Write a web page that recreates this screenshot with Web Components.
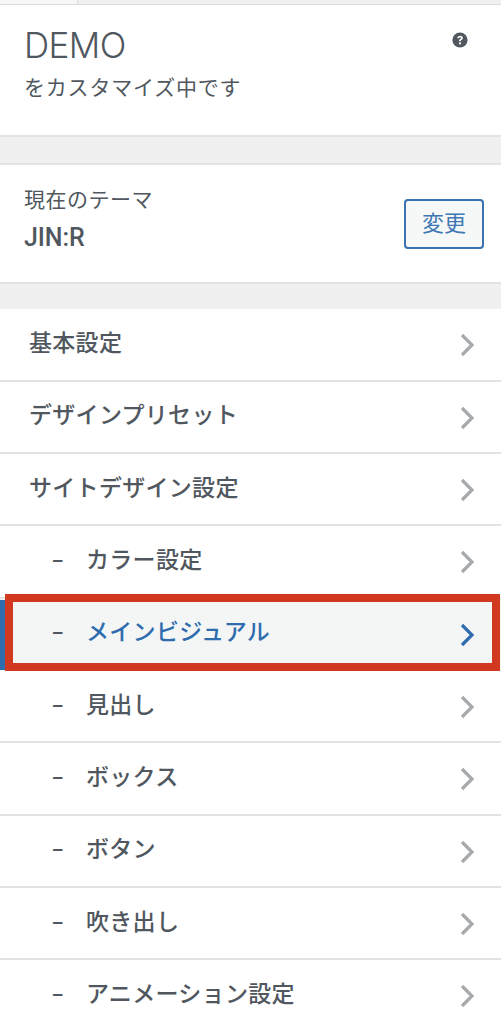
<!DOCTYPE html>
<html lang="ja">
<head>
<meta charset="utf-8">
<title>DEMO</title>
<style>
  html, body { margin: 0; padding: 0; background: #fff; }
  body { width: 501px; height: 1024px; overflow: hidden; font-family: "Liberation Sans", "Noto Sans CJK JP", sans-serif; color: #50575e; }
</style>
</head>
<body>
<top-strip></top-strip>
<customize-info name="DEMO" note="をカスタマイズ中です"></customize-info>
<gray-gap h="26"></gray-gap>
<theme-info label="現在のテーマ" theme="JIN:R" action="変更"></theme-info>
<gray-gap h="25.3"></gray-gap>
<menu-list>
  <menu-row>基本設定</menu-row>
  <menu-row>デザインプリセット</menu-row>
  <menu-row>サイトデザイン設定</menu-row>
  <menu-row sub>カラー設定</menu-row>
  <menu-row sub active>メインビジュアル</menu-row>
  <menu-row sub>見出し</menu-row>
  <menu-row sub>ボックス</menu-row>
  <menu-row sub>ボタン</menu-row>
  <menu-row sub>吹き出し</menu-row>
  <menu-row sub>アニメーション設定</menu-row>
</menu-list>

<script>
class TopStrip extends HTMLElement{
  constructor(){
    super()
    this.attachShadow({mode:'open'})
    this.shadowRoot.innerHTML = `
    <style>
      :host{ display:flex; height:5px; box-sizing:border-box; background:#f0f0f1; border-bottom:1px solid #dcdcde; }
      .tab{ width:77px; background:#f6f7f7; border-right:1px solid #dcdcde; }
    </style>
    <div class="tab"></div>`
  }
}
customElements.define('top-strip', TopStrip)

class GrayGap extends HTMLElement{
  constructor(){
    super()
    this.attachShadow({mode:'open'})
  }
  connectedCallback(){
    this.shadowRoot.innerHTML = `
    <style>
      :host{ display:block; box-sizing:border-box; background:#f0f0f1; height:${this.getAttribute('h')}px; }
    </style>`
  }
}
customElements.define('gray-gap', GrayGap)

class CustomizeInfo extends HTMLElement{
  constructor(){
    super()
    this.attachShadow({mode:'open'})
  }
  connectedCallback(){
    this.shadowRoot.innerHTML = `
    <style>
      :host{ display:block; position:relative; box-sizing:border-box; height:132px; background:#fff;
        border-bottom:2px solid #e2e3e4; padding:24px 24px 0; color:#50575e; }
      .name{ font-size:35px; line-height:36px; font-weight:300; font-family:"Inter","Liberation Sans",sans-serif; letter-spacing:-.6px; height:36px; margin-top:-2px; }
      .note{ font-size:21px; line-height:28px; margin-top:9px; font-family:"Noto Sans CJK JP",sans-serif; letter-spacing:.8px; }
      svg{ position:absolute; top:27px; right:33px; width:16px; height:16px; }
    </style>
    <div class="name">${this.getAttribute('name')}</div>
    <div class="note">${this.getAttribute('note')}</div>
    <svg viewBox="0 0 16 16" aria-hidden="true">
      <circle cx="8" cy="8" r="7.6" fill="#50575e"/>
      <path d="M5.3 6.2c0-1.6 1.2-2.5 2.8-2.5 1.6 0 2.7.9 2.7 2.2 0 1-.5 1.5-1.3 2-.6.4-.8.6-.8 1.3H7c0-1.2.3-1.7 1.1-2.2.6-.4.9-.6.9-1 0-.4-.4-.7-.9-.7-.6 0-1 .3-1 .9z" fill="#fff"/>
      <rect x="7" y="10.4" width="1.9" height="1.9" fill="#fff"/>
    </svg>`
  }
}
customElements.define('customize-info', CustomizeInfo)

class ThemeInfo extends HTMLElement{
  constructor(){
    super()
    this.attachShadow({mode:'open'})
  }
  connectedCallback(){
    this.shadowRoot.innerHTML = `
    <style>
      :host{ display:flex; align-items:center; justify-content:space-between; box-sizing:border-box; height:121px;
        background:#fff; border-top:2px solid #e2e3e4; border-bottom:2px solid #e2e3e4; padding:0 17px 0 24px; color:#50575e; }
      .label{ font-size:21px; line-height:28px; font-family:"Noto Sans CJK JP",sans-serif; letter-spacing:.5px; margin-top:-11px; }
      .theme{ font-family:Roboto,"Liberation Sans",sans-serif; font-size:25px; line-height:28px; font-weight:500; margin-top:12px; letter-spacing:-.1px; }
      button{ width:80px; height:50px; box-sizing:border-box; background:#f6f7f7; color:#3f78b5; border:2px solid #3a74b0; border-radius:4px;
        font:400 22px "Noto Sans CJK JP",sans-serif; padding:0 0 5px; }
    </style>
    <div>
      <div class="label">${this.getAttribute('label')}</div>
      <div class="theme">${this.getAttribute('theme')}</div>
    </div>
    <button type="button">${this.getAttribute('action')}</button>`
  }
}
customElements.define('theme-info', ThemeInfo)

class MenuList extends HTMLElement{
  constructor(){
    super()
    this.attachShadow({mode:'open'})
    this.shadowRoot.innerHTML = `
    <style>
      :host{ display:block; background:#fff; }
    </style>
    <slot></slot>`
  }
}
customElements.define('menu-list', MenuList)

class MenuRow extends HTMLElement{
  constructor(){
    super()
    this.attachShadow({mode:'open'})
    this.shadowRoot.innerHTML = `
    <style>
      :host{ display:flex; align-items:center; position:relative; box-sizing:border-box; height:72.35px; padding-left:29px; padding-bottom:7px;
        border-bottom:2px solid #e2e3e4; color:#50575e; background:#fff;
        font:500 23px "Noto Sans CJK JP",sans-serif; letter-spacing:.3px; }
      :host([sub]){ padding-left:52px; }
      .dash{ display:none; width:34px; flex:none; font-size:21px; font-weight:700; }
      :host([sub]) .dash{ display:block; }
      svg{ position:absolute; right:26px; top:24px; width:15px; height:24px; }
      svg path{ fill:none; stroke:#a7aaad; stroke-width:3.2; }
      :host([active]){ background:#f4f6f6; color:#2f6cae; border-bottom-color:transparent; }
      :host([active]) .dash{ color:#50575e; }
      :host([active]) svg path{ stroke:#2f6cae; }
      .bar,.mark{ display:none; position:absolute; }
      :host([active]) .bar{ display:block; left:0; top:1px; bottom:-1px; width:6px; background:#2f6cae; }
      :host([active]) .mark{ display:block; left:5px; right:1px; top:-4.6px; bottom:-1.6px; border:8px solid #d0391f; box-sizing:border-box; }
    </style>
    <span class="bar"></span>
    <span class="dash">–</span>
    <slot></slot>
    <svg viewBox="0 0 15 24" aria-hidden="true"><path d="M2 2l10 10L2 22"/></svg>
    <span class="mark"></span>`
  }
}
customElements.define('menu-row', MenuRow)
</script>
</body>
</html>
